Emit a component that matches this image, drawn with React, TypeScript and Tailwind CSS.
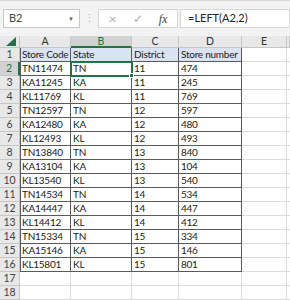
import React from "react";

const rows: string[][] = [
  ["Store Code", "State", "District", "Store number"],
  ["TN11474", "TN", "11", "474"],
  ["KA11245", "KA", "11", "245"],
  ["KL11769", "KL", "11", "769"],
  ["TN12597", "TN", "12", "597"],
  ["KA12480", "KA", "12", "480"],
  ["KL12493", "KL", "12", "493"],
  ["TN13840", "TN", "13", "840"],
  ["KA13104", "KA", "13", "104"],
  ["KL13540", "KL", "13", "540"],
  ["TN14534", "TN", "14", "534"],
  ["KA14447", "KA", "14", "447"],
  ["KL14412", "KL", "14", "412"],
  ["TN15334", "TN", "15", "334"],
  ["KA15146", "KA", "15", "146"],
  ["KL15801", "KL", "15", "801"],
  ["", "", "", ""],
  ["", "", "", ""],
];

const cols = ["A", "B", "C", "D", "E", ""];

export default function App() {
  return (
    <div
      className="w-[290px] h-[300px] overflow-hidden bg-white text-[#222]"
      style={{ fontFamily: "Lato, 'Liberation Sans', sans-serif" }}
    >
      {/* formula bar */}
      <div className="h-[36px] bg-[#f3f3f3] border-t border-[#d8d8d8] relative">
        <div className="flex items-start pt-[8px] pl-[3px]">
          <div className="w-[77px] h-[19px] bg-white border border-[#c8c8c8] flex items-center justify-between pl-[5px] pr-[5px]">
            <span className="text-[11px] text-[#444]">B2</span>
            <span className="text-[6px] text-[#666]">▼</span>
          </div>
          <div className="w-[18px] h-[19px] flex items-center justify-center text-[#b5b5b5] text-[11px]">⋮</div>
          <div className="w-[80px] h-[19px] bg-white border border-[#d6d6d6] flex items-center">
            <span className="w-[27px] text-center text-[#b0b0b0] text-[14px] leading-none">×</span>
            <span className="w-[24px] text-center text-[#b0b0b0] text-[12px] leading-none">✓</span>
            <span
              className="w-[26px] text-center text-[#444] text-[12px] italic leading-none"
              style={{ fontFamily: "'Liberation Serif', serif" }}
            >
              fx
            </span>
          </div>
          <div className="ml-[2px] flex-1 h-[19px] bg-white border border-[#d6d6d6] flex items-center pl-[7px]">
            <span className="text-[11px] text-[#222]">=LEFT(A2,2)</span>
          </div>
        </div>
      </div>

      {/* grid */}
      <div className="grid grid-cols-[20px_51px_61px_47px_63px_45px_3px] grid-rows-[12px]">
        <div className="h-[12px] bg-[#e8e8e8] border-r border-b border-[#c6c6c6] relative">
          <svg className="absolute right-[3px] bottom-[1px]" width="10" height="9" viewBox="0 0 10 9">
            <polygon points="10,0 10,9 0,9" fill="#217346" />
          </svg>
        </div>
        {cols.map((c, i) => (
          <div
            key={c + i}
            className={
              i === 1
                ? "h-[12px] bg-[#d2d2d2] border-r border-[#c6c6c6] border-b-2 border-b-[#217346] text-[#217346] text-[10.5px] leading-[11px] text-center"
                : "h-[12px] bg-[#e8e8e8] border-r border-b border-[#c6c6c6] text-[#333] text-[10.5px] leading-[11px] text-center"
            }
          >
            {c}
          </div>
        ))}

        {rows.map((r, ri) => {
          const rowNum = ri + 1;
          const inTable = ri < 16;
          return (
            <React.Fragment key={ri}>
              <div
                className={
                  rowNum === 2
                    ? "h-[14px] bg-[#d2d2d2] border-r-2 border-r-[#217346] border-b border-[#c6c6c6] text-[#217346] text-[10.5px] leading-[13px] text-center"
                    : "h-[14px] bg-[#e8e8e8] border-r border-b border-[#c6c6c6] text-[#444] text-[10.5px] leading-[13px] text-center"
                }
              >
                {rowNum}
              </div>
              {r.map((v, ci) => {
                const selected = rowNum === 2 && ci === 1;
                const fill = rowNum === 1 ? "bg-[#dae3f2]" : "bg-white";
                const border = inTable
                  ? "border-r border-b border-[#5a5a5a]"
                  : "border-r border-b border-[#dcdcdc]";
                const left = ci === 0 && inTable ? "border-l border-l-[#5a5a5a] pl-[1px]" : "pl-[2px]";
                return (
                  <div
                    key={ci}
                    className={`h-[14px] ${fill} ${border} ${left} text-[10px] tracking-[-0.25px] leading-[13px] whitespace-nowrap relative ${
                      selected ? "outline-2 outline-[#217346] -outline-offset-1 z-10" : "overflow-hidden"
                    }`}
                  >
                    {v}
                    {selected && (
                      <span className="absolute right-[-3px] bottom-[-3px] w-[5px] h-[5px] bg-[#217346] border border-white" />
                    )}
                  </div>
                );
              })}
              <div className="h-[14px] border-r border-b border-[#dcdcdc]" />
              <div className="h-[14px] border-b border-[#dcdcdc]" />
            </React.Fragment>
          );
        })}
      </div>
    </div>
  );
}
